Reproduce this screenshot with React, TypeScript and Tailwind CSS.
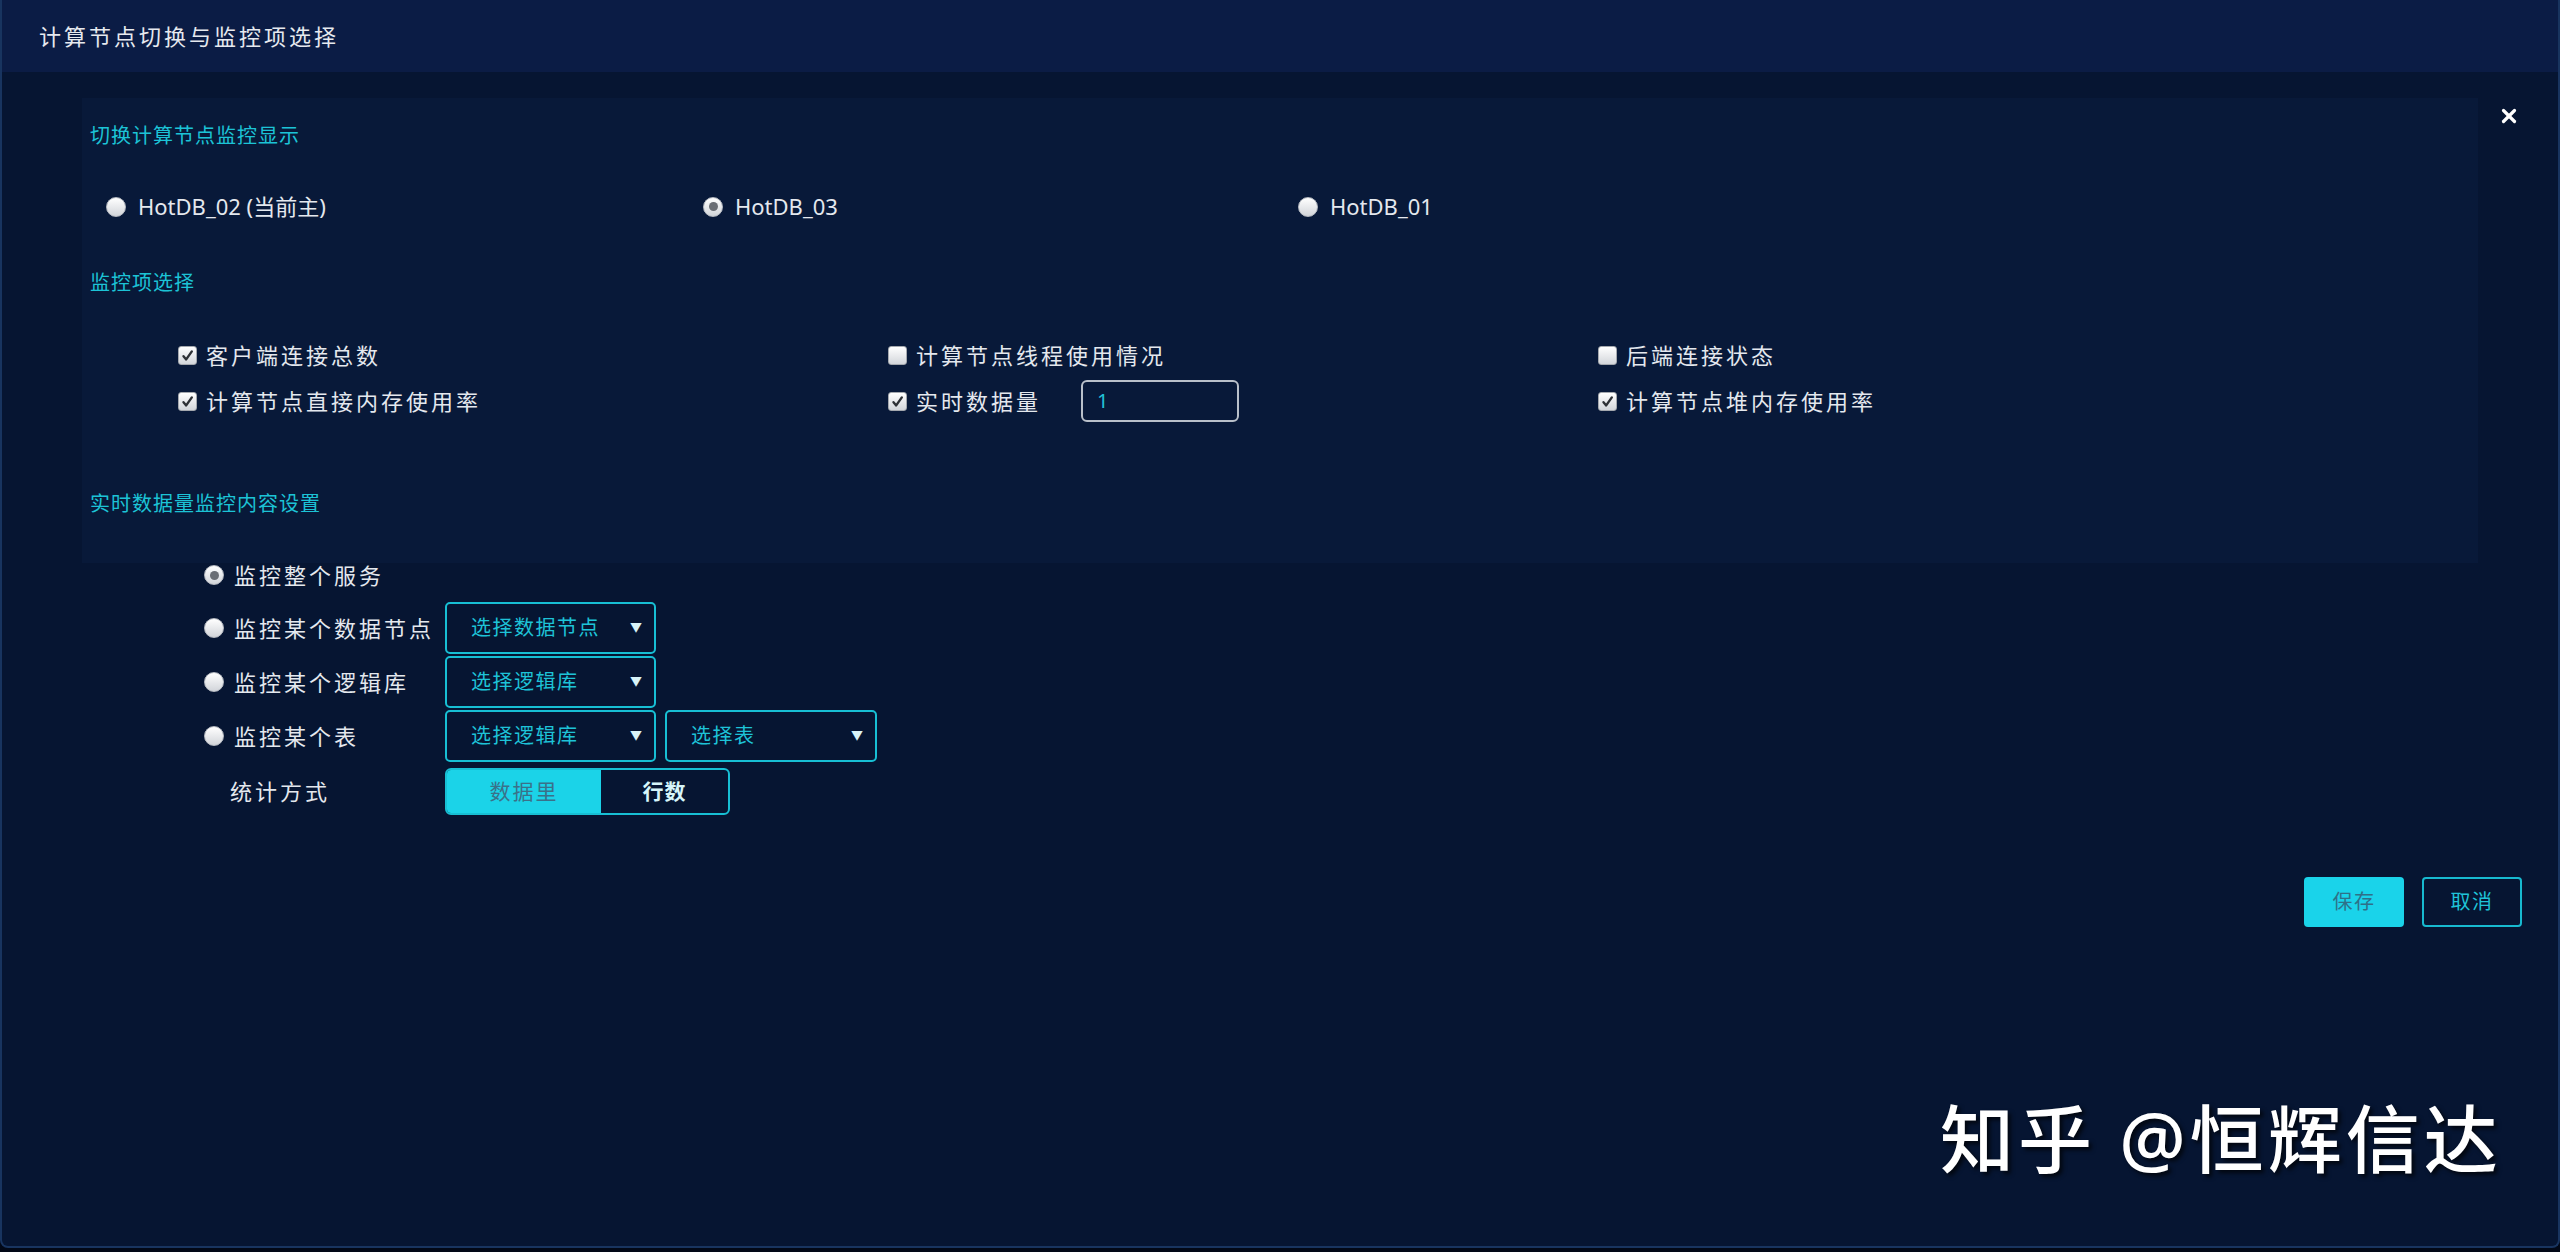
import { X } from "lucide-react";

const font = "font-['Noto_Sans','Noto_Sans_CJK_SC',sans-serif]";

function Radio({ checked }: { checked?: boolean }) {
  return (
    <span className="flex h-[20px] w-[20px] shrink-0 items-center justify-center rounded-full border border-[#b8bcc3] bg-linear-to-b from-[#ffffff] to-[#d2d5da]">
      {checked && <span className="h-[9px] w-[9px] rounded-full bg-[#6a6e74]" />}
    </span>
  );
}

function Checkbox({ checked }: { checked?: boolean }) {
  return (
    <span className="flex h-[19px] w-[19px] shrink-0 items-center justify-center rounded-[3px] border border-[#a4a8ae] bg-linear-to-b from-[#ffffff] to-[#d3d6db]">
      {checked && (
        <svg viewBox="0 0 12 12" className="h-[13px] w-[13px]">
          <path d="M2.3 6.6 L4.8 9.6 L10 2.2" stroke="#2e3136" strokeWidth="2.2" fill="none" strokeLinecap="round" strokeLinejoin="round" />
        </svg>
      )}
    </span>
  );
}

function Select({ label, width = "w-[211px]" }: { label: string; width?: string }) {
  return (
    <div className={`flex h-[52px] ${width} items-center justify-between rounded-[5px] border-2 border-[#17bfd4] pl-[24px] pr-[12px]`}>
      <span className="text-[20px] tracking-[1.5px] text-[#1ec3d8]">{label}</span>
      <span className="text-[12px] text-[#d8f3f8]">▼</span>
    </div>
  );
}

function Heading({ children, className = "" }: { children: string; className?: string }) {
  return (
    <div className={`h-[28px] pl-[8px] text-[20px] leading-[28px] tracking-[1px] text-[#1cc3d6] ${className}`}>
      {children}
    </div>
  );
}

const label = "text-[22px] tracking-[3px] text-[#e4e8ee]";

export default function App() {
  const nodes = [
    { name: "HotDB_02 (当前主)", checked: false },
    { name: "HotDB_03", checked: true },
    { name: "HotDB_01", checked: false },
  ];

  const items = [
    { name: "客户端连接总数", checked: true },
    { name: "计算节点线程使用情况", checked: false },
    { name: "后端连接状态", checked: false },
    { name: "计算节点直接内存使用率", checked: true },
    { name: "实时数据量", checked: true, input: true },
    { name: "计算节点堆内存使用率", checked: true },
  ];

  return (
    <div className={`min-h-screen bg-[#020816] ${font}`}>
      <div className="relative flex h-[1248px] flex-col overflow-hidden rounded-b-[8px] border-2 border-t-0 border-[#18345f] bg-[#061532]">
        <header className="flex h-[72px] shrink-0 items-center bg-[#0b1c45] pl-[37px]">
          <span className="text-[22px] tracking-[3px] text-[#e6e9ef]">计算节点切换与监控项选择</span>
        </header>

        <button type="button" className="absolute right-[38px] top-[105px] text-white">
          <X className="h-[22px] w-[22px]" strokeWidth={3.5} />
        </button>

        <div className="pt-[26px]">
          <section className="ml-[80px] h-[465px] w-[2396px] bg-[#081939] pt-[24px]">
            <Heading>切换计算节点监控显示</Heading>

            <div className="mt-[40px] grid h-[30px] grid-cols-[597px_595px_auto] pl-[24px]">
              {nodes.map((node) => (
                <label key={node.name} className="flex items-center gap-[12px]">
                  <Radio checked={node.checked} />
                  <span className="text-[22px] text-[#e4e8ee]">{node.name}</span>
                </label>
              ))}
            </div>

            <Heading className="mt-[49px]">监控项选择</Heading>

            <div className="mt-[35px] grid grid-cols-[710px_710px_auto] pl-[96px]">
              {items.map((item) => (
                <label key={item.name} className="flex h-[46px] items-center gap-[9px]">
                  <Checkbox checked={item.checked} />
                  <span className={label}>{item.name}</span>
                  {item.input && (
                    <span className="ml-[31px] flex h-[42px] w-[158px] items-center rounded-[6px] border-2 border-[#b9c0ca] pl-[14px] text-[20px] text-[#22c4da]">
                      1
                    </span>
                  )}
                </label>
              ))}
            </div>

            <Heading className="mt-[66px]">实时数据量监控内容设置</Heading>
          </section>

          <div className="flex flex-col gap-[2px] pl-[202px]">
            <div className="flex h-[37px] items-start">
              <label className="flex h-[24px] items-center gap-[10px]">
                <Radio checked />
                <span className={label}>监控整个服务</span>
              </label>
            </div>
            <div className="flex h-[52px] items-center">
              <label className="flex w-[241px] items-center gap-[10px]">
                <Radio />
                <span className={label}>监控某个数据节点</span>
              </label>
              <Select label="选择数据节点" />
            </div>
            <div className="flex h-[52px] items-center">
              <label className="flex w-[241px] items-center gap-[10px]">
                <Radio />
                <span className={label}>监控某个逻辑库</span>
              </label>
              <Select label="选择逻辑库" />
            </div>
            <div className="flex h-[52px] items-center">
              <label className="flex w-[241px] items-center gap-[10px]">
                <Radio />
                <span className={label}>监控某个表</span>
              </label>
              <Select label="选择逻辑库" />
              <div className="ml-[9px]">
                <Select label="选择表" width="w-[212px]" />
              </div>
            </div>
            <div className="mt-[4px] flex h-[47px] items-center">
              <span className={`w-[241px] pl-[26px] ${label}`}>统计方式</span>
              <div className="flex h-[47px] w-[285px] overflow-hidden rounded-[6px] border-2 border-[#17bfd4]">
                <span className="flex w-[154px] items-center justify-center bg-[#1bd3e8] text-[21px] tracking-[2px] text-[#3a7189]">
                  数据里
                </span>
                <span className="flex flex-1 items-center justify-center text-[21px] font-bold tracking-[1px] text-[#d6f5fa]">
                  行数
                </span>
              </div>
            </div>
          </div>

          <div className="mt-[62px] flex justify-end gap-[18px] pr-[36px]">
            <button type="button" className="h-[50px] w-[100px] rounded-[4px] bg-[#1ad3ea] text-[20px] tracking-[1.5px] text-[#2f7088]">
              保存
            </button>
            <button type="button" className="h-[50px] w-[100px] rounded-[4px] border-2 border-[#17b9cf] text-[20px] tracking-[1.5px] text-[#1fc3d8]">
              取消
            </button>
          </div>
        </div>

        <div className="absolute left-[1938px] top-[1102px] text-[74px] font-medium leading-none tracking-[4px] text-white [text-shadow:3px_3px_4px_rgba(0,0,0,0.7)]">
          知乎 @恒辉信达
        </div>
      </div>
    </div>
  );
}
